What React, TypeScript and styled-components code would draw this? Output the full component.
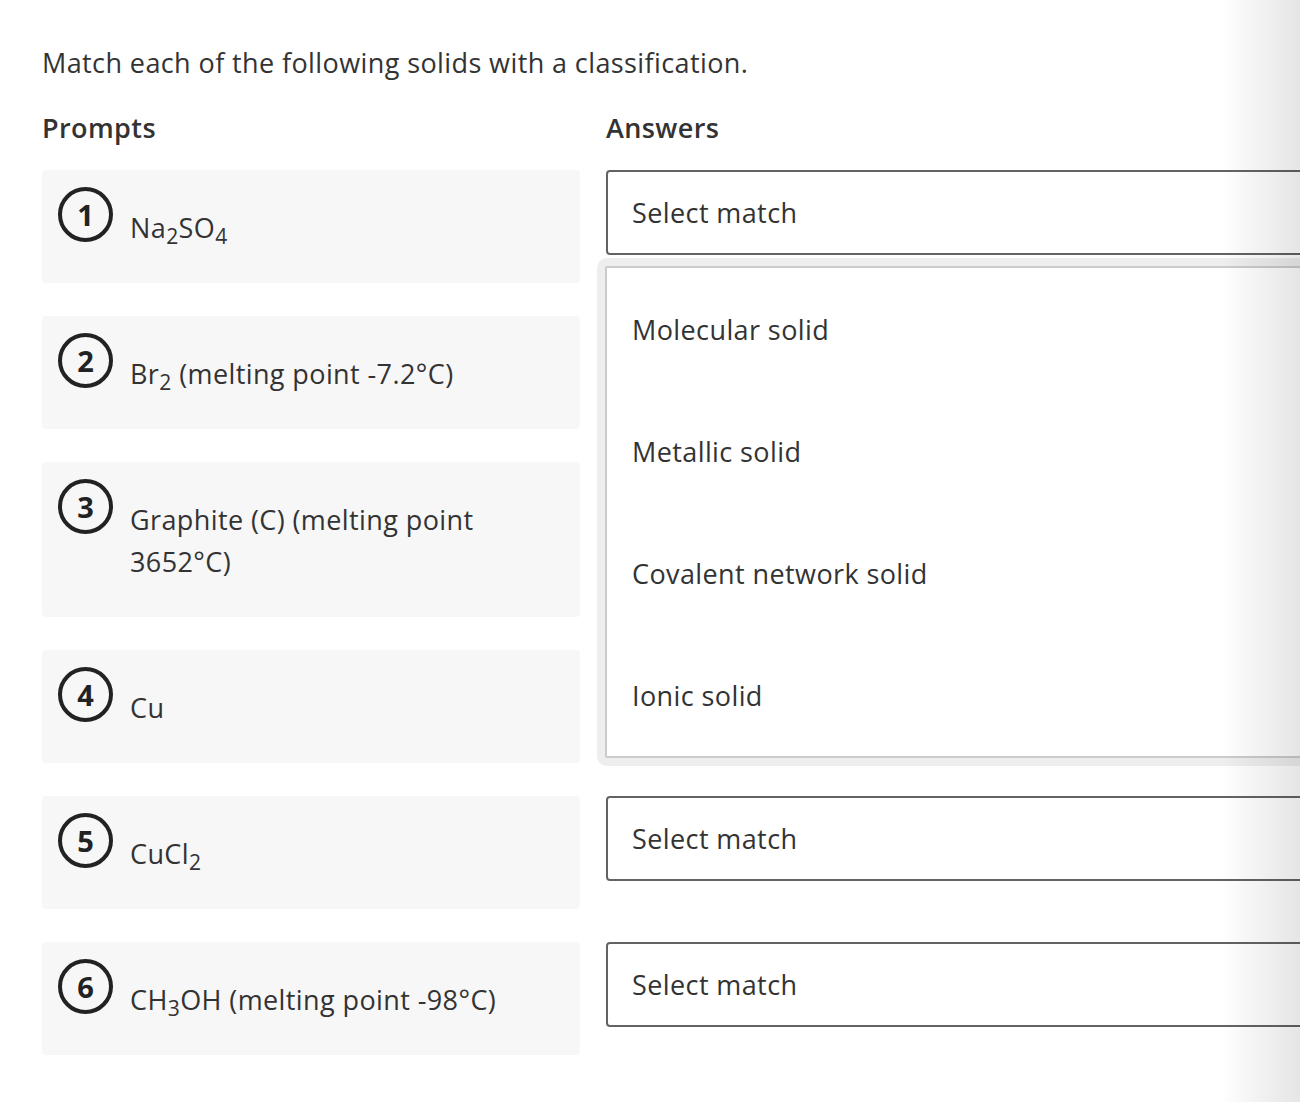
import * as React from 'react';
import styled, { createGlobalStyle } from 'styled-components';

const GlobalStyle = createGlobalStyle`
    html, body {
        margin: 0;
        padding: 0;
        background: #ffffff;
        overflow: hidden;
    }
    body {
        font-family: 'Open Sans', 'Noto Sans', Arial, sans-serif;
        color: #333333;
        letter-spacing: 0.4px;
    }
`;

const Page = styled.div`
    width: 1300px;
    height: 1102px;
    overflow: hidden;
    padding: 45px 0 0 42px;
    box-sizing: border-box;
    position: relative;
`;

const Title = styled.p`
    margin: 0 0 29px 0;
    font-size: 27px;
    line-height: 36px;
    color: #333333;
    white-space: nowrap;
`;

const Board = styled.div`
    display: grid;
    grid-template-columns: 538px 760px;
    column-gap: 26px;
    row-gap: 33px;
    align-items: start;
`;

const Heading = styled.h2`
    margin: 0 0 -9px 0;
    font-size: 27px;
    line-height: 36px;
    font-weight: 600;
    color: #333333;
`;

const Card = styled.div`
    display: flex;
    align-items: flex-start;
    background-color: #f7f7f7;
    border-radius: 4px;
    padding: 17px 60px 34px 16px;
`;

const Badge = styled.div`
    flex-shrink: 0;
    width: 55px;
    height: 55px;
    box-sizing: border-box;
    border: 4px solid #222222;
    border-radius: 50%;
    display: flex;
    align-items: center;
    justify-content: center;
    font-size: 29px;
    font-weight: 700;
    letter-spacing: 0;
    color: #222222;
    line-height: 1;
`;

const PromptText = styled.div`
    margin: 20px 0 0 17px;
    font-size: 27px;
    line-height: 42px;
    color: #333333;
`;

const Sub = styled.sub`
    font-size: 0.78em;
    line-height: 0;
    vertical-align: -0.3em;
`;

const Cell = styled.div`
    position: relative;
`;

const SelectBox = styled.div`
    height: 85px;
    box-sizing: border-box;
    border: 2px solid #636363;
    border-radius: 4px;
    background: #ffffff;
    display: flex;
    align-items: center;
    padding-left: 24px;
    font-size: 27px;
    color: #333333;
`;

const ListFrame = styled.div`
    position: absolute;
    top: 88px;
    left: -9px;
    right: 0;
    z-index: 2;
    padding: 8px;
    background: #eeeeee;
    border-radius: 10px;
`;

const ListBox = styled.div`
    background: #ffffff;
    border: 2px solid #cbcbcb;
    border-radius: 2px;
`;

const Option = styled.div`
    height: 122px;
    display: flex;
    align-items: center;
    padding-left: 25px;
    font-size: 27px;
    color: #333333;
`;

const EdgeShade = styled.div`
    position: absolute;
    top: 0;
    right: 0;
    bottom: 0;
    width: 80px;
    pointer-events: none;
    z-index: 5;
    background: linear-gradient(to right, rgba(0, 0, 0, 0), rgba(0, 0, 0, 0.1));
`;

type Prompt = { n: number; content: React.ReactNode; covered?: boolean };

// rows 2-4 sit under the open list of row 1, so their selects are not drawn
const prompts: Prompt[] = [
    { n: 1, content: <>Na<Sub>2</Sub>SO<Sub>4</Sub></> },
    { n: 2, content: <>Br<Sub>2</Sub> (melting point -7.2°C)</>, covered: true },
    { n: 3, content: <>Graphite (C) (melting point 3652°C)</>, covered: true },
    { n: 4, content: <>Cu</>, covered: true },
    { n: 5, content: <>CuCl<Sub>2</Sub></> },
    { n: 6, content: <>CH<Sub>3</Sub>OH (melting point -98°C)</> },
];

const options = ['Molecular solid', 'Metallic solid', 'Covalent network solid', 'Ionic solid'];

export default function App() {
    return (
        <>
            <GlobalStyle />
            <Page>
                <Title>Match each of the following solids with a classification.</Title>
                <Board>
                    <Heading>Prompts</Heading>
                    <Heading>Answers</Heading>
                    {prompts.map((p) => (
                        <React.Fragment key={p.n}>
                            <Card>
                                <Badge>{p.n}</Badge>
                                <PromptText>{p.content}</PromptText>
                            </Card>
                            <Cell>
                                {!p.covered && <SelectBox>Select match</SelectBox>}
                                {p.n === 1 && (
                                    <ListFrame>
                                        <ListBox>
                                            {options.map((o) => (
                                                <Option key={o}>{o}</Option>
                                            ))}
                                        </ListBox>
                                    </ListFrame>
                                )}
                            </Cell>
                        </React.Fragment>
                    ))}
                </Board>
                <EdgeShade />
            </Page>
        </>
    );
}
